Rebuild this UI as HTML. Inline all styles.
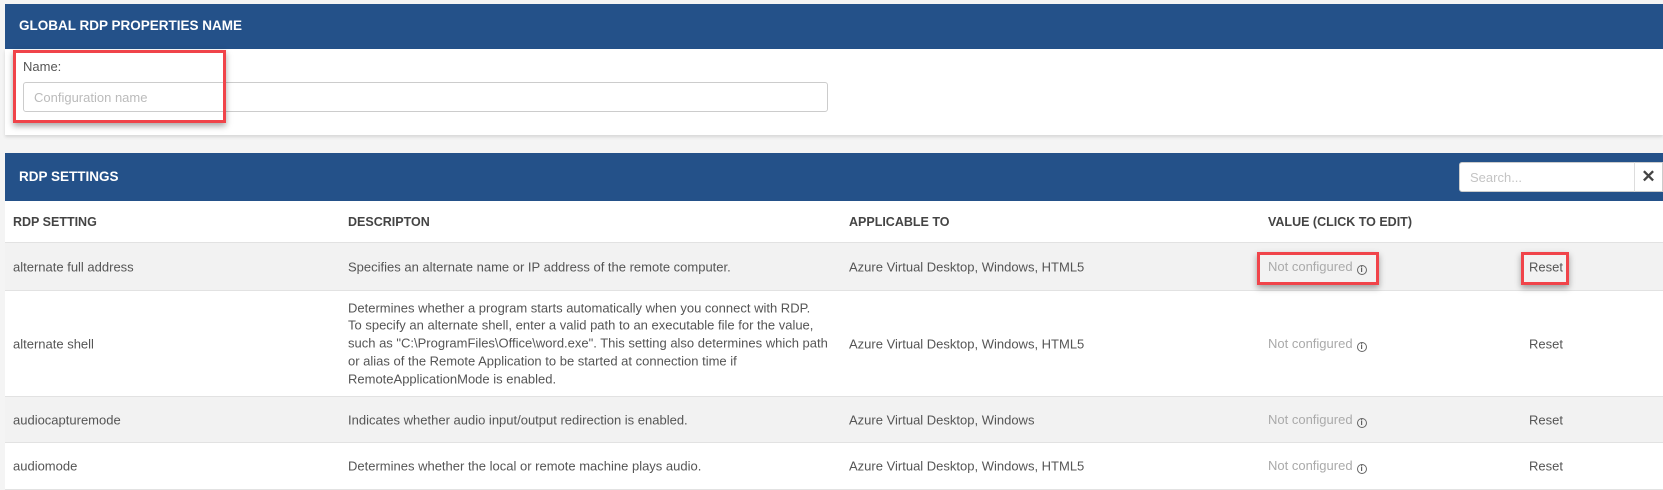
<!DOCTYPE html>
<html><head><meta charset="utf-8"><style>
*{box-sizing:border-box;margin:0;padding:0}
body{width:1663px;height:490px;background:#f4f4f4;font-family:"Liberation Sans",sans-serif;font-size:13px;color:#555;position:relative;overflow:hidden}
.abs{position:absolute}
.hdr{background:#245189;color:#fff;font-weight:bold;font-size:13.5px;left:5px;right:0}
.row{position:absolute;left:5px;right:0;border-bottom:1px solid #e2e2e2}
.c{position:absolute;top:50%;transform:translateY(-50%);white-space:nowrap}
.red{position:absolute;border:3px solid #f0444a;box-shadow:0 3px 6px rgba(0,0,0,.35)}
.nc{color:#aaa}
.i{display:inline-block;width:10px;height:10px;border:1px solid #666;border-radius:50%;font-size:8px;line-height:8px;text-align:center;color:#555;vertical-align:-1px;margin-left:4px;font-weight:bold}
</style></head><body>
<div class="abs hdr" style="top:4px;height:45px"><div class="abs" style="left:14px;top:14px">GLOBAL RDP PROPERTIES NAME</div></div>
<div class="abs" style="left:5px;right:0;top:49px;height:86px;background:#fff;box-shadow:0 2px 3px rgba(0,0,0,.12)"></div>
<div class="abs" style="left:23px;top:59px;color:#555">Name:</div>
<div class="abs" style="left:23px;top:82px;width:805px;height:30px;border:1px solid #ccc;border-radius:3px;background:#fff"><span class="abs" style="left:10px;top:7px;color:#bbb">Configuration name</span></div>
<div class="red" style="left:13px;top:50px;width:213px;height:73px"></div>

<div class="abs hdr" style="top:153px;height:48px"><div class="abs" style="left:14px;top:16px">RDP SETTINGS</div></div>
<div class="abs" style="left:1459px;top:162px;width:176px;height:30px;background:#fff;border:1px solid #ccc;border-radius:3px 0 0 3px"><span class="abs" style="left:10px;top:7px;color:#c4c4c4">Search...</span></div>
<div class="abs" style="left:1634px;top:162px;width:29px;height:30px;background:#fff;border:1px solid #ccc;border-left:1px solid #ddd;text-align:center;font-size:17px;line-height:28px;color:#444;font-weight:bold">✕</div>

<div class="row" style="top:201px;height:42px;background:#fff;font-weight:bold;color:#444;font-size:12.5px">
<span class="c" style="left:8px">RDP SETTING</span><span class="c" style="left:343px">DESCRIPTON</span><span class="c" style="left:844px">APPLICABLE TO</span><span class="c" style="left:1263px">VALUE (CLICK TO EDIT)</span></div>

<div class="row" style="top:243px;height:48px;background:#f2f2f2">
<span class="c" style="left:8px">alternate full address</span><span class="c" style="left:343px">Specifies an alternate name or IP address of the remote computer.</span><span class="c" style="left:844px">Azure Virtual Desktop, Windows, HTML5</span><span class="c nc" style="left:1263px">Not configured<span class="i">i</span></span><span class="c" style="left:1524px">Reset</span></div>

<div class="row" style="top:291px;height:106px;background:#fff">
<span class="c" style="left:8px">alternate shell</span><span class="c" style="left:343px;line-height:17.8px">Determines whether a program starts automatically when you connect with RDP.<br>To specify an alternate shell, enter a valid path to an executable file for the value,<br>such as "C:\ProgramFiles\Office\word.exe". This setting also determines which path<br>or alias of the Remote Application to be started at connection time if<br>RemoteApplicationMode is enabled.</span><span class="c" style="left:844px">Azure Virtual Desktop, Windows, HTML5</span><span class="c nc" style="left:1263px">Not configured<span class="i">i</span></span><span class="c" style="left:1524px">Reset</span></div>

<div class="row" style="top:397px;height:46px;background:#f2f2f2">
<span class="c" style="left:8px">audiocapturemode</span><span class="c" style="left:343px">Indicates whether audio input/output redirection is enabled.</span><span class="c" style="left:844px">Azure Virtual Desktop, Windows</span><span class="c nc" style="left:1263px">Not configured<span class="i">i</span></span><span class="c" style="left:1524px">Reset</span></div>

<div class="row" style="top:443px;height:47px;background:#fff">
<span class="c" style="left:8px">audiomode</span><span class="c" style="left:343px">Determines whether the local or remote machine plays audio.</span><span class="c" style="left:844px">Azure Virtual Desktop, Windows, HTML5</span><span class="c nc" style="left:1263px">Not configured<span class="i">i</span></span><span class="c" style="left:1524px">Reset</span></div>

<div class="red" style="left:1257px;top:252px;width:122px;height:33px"></div>
<div class="red" style="left:1521px;top:252px;width:48px;height:33px"></div>
</body></html>
